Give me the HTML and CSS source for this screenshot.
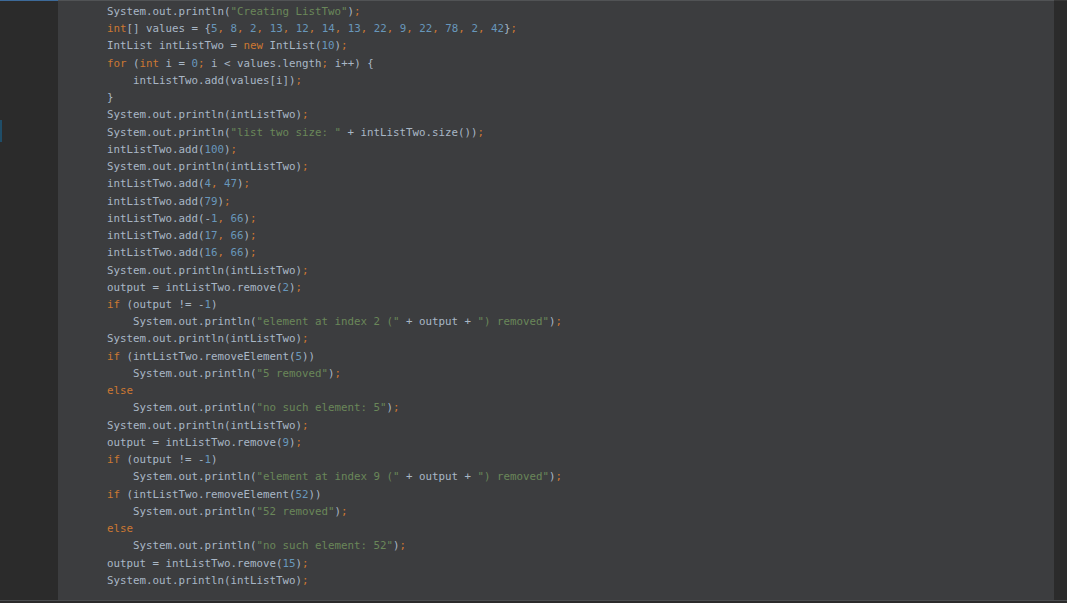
FILE: index.html
```html
<!DOCTYPE html>
<html>
<head>
<meta charset="utf-8">
<link rel="stylesheet" href="styles.css">
</head>
<body>
<div class="window">
  <div class="main">
    <div class="gutter"><span class="marker"></span></div>
    <div class="code">
<div class="line"><span class="d">System.out.println(</span><span class="s">"Creating ListTwo"</span>)<span class="k">;</span></div>
<div class="line"><span class="k">int</span>[] values = {<span class="n">5</span><span class="k">, </span><span class="n">8</span><span class="k">, </span><span class="n">2</span><span class="k">, </span><span class="n">13</span><span class="k">, </span><span class="n">12</span><span class="k">, </span><span class="n">14</span><span class="k">, </span><span class="n">13</span><span class="k">, </span><span class="n">22</span><span class="k">, </span><span class="n">9</span><span class="k">, </span><span class="n">22</span><span class="k">, </span><span class="n">78</span><span class="k">, </span><span class="n">2</span><span class="k">, </span><span class="n">42</span>}<span class="k">;</span></div>
<div class="line">IntList intListTwo = <span class="k">new </span>IntList(<span class="n">10</span>)<span class="k">;</span></div>
<div class="line"><span class="k">for </span>(<span class="k">int </span>i = <span class="n">0</span><span class="k">; </span>i &lt; values.length<span class="k">; </span>i++) {</div>
<div class="line">    intListTwo.add(values[i])<span class="k">;</span></div>
<div class="line">}</div>
<div class="line">System.out.println(intListTwo)<span class="k">;</span></div>
<div class="line">System.out.println(<span class="s">"list two size: "</span> + intListTwo.size())<span class="k">;</span></div>
<div class="line">intListTwo.add(<span class="n">100</span>)<span class="k">;</span></div>
<div class="line">System.out.println(intListTwo)<span class="k">;</span></div>
<div class="line">intListTwo.add(<span class="n">4</span><span class="k">, </span><span class="n">47</span>)<span class="k">;</span></div>
<div class="line">intListTwo.add(<span class="n">79</span>)<span class="k">;</span></div>
<div class="line">intListTwo.add(-<span class="n">1</span><span class="k">, </span><span class="n">66</span>)<span class="k">;</span></div>
<div class="line">intListTwo.add(<span class="n">17</span><span class="k">, </span><span class="n">66</span>)<span class="k">;</span></div>
<div class="line">intListTwo.add(<span class="n">16</span><span class="k">, </span><span class="n">66</span>)<span class="k">;</span></div>
<div class="line">System.out.println(intListTwo)<span class="k">;</span></div>
<div class="line">output = intListTwo.remove(<span class="n">2</span>)<span class="k">;</span></div>
<div class="line"><span class="k">if </span>(output != -<span class="n">1</span>)</div>
<div class="line">    System.out.println(<span class="s">"element at index 2 ("</span> + output + <span class="s">") removed"</span>)<span class="k">;</span></div>
<div class="line">System.out.println(intListTwo)<span class="k">;</span></div>
<div class="line"><span class="k">if </span>(intListTwo.removeElement(<span class="n">5</span>))</div>
<div class="line">    System.out.println(<span class="s">"5 removed"</span>)<span class="k">;</span></div>
<div class="line"><span class="k">else</span></div>
<div class="line">    System.out.println(<span class="s">"no such element: 5"</span>)<span class="k">;</span></div>
<div class="line">System.out.println(intListTwo)<span class="k">;</span></div>
<div class="line">output = intListTwo.remove(<span class="n">9</span>)<span class="k">;</span></div>
<div class="line"><span class="k">if </span>(output != -<span class="n">1</span>)</div>
<div class="line">    System.out.println(<span class="s">"element at index 9 ("</span> + output + <span class="s">") removed"</span>)<span class="k">;</span></div>
<div class="line"><span class="k">if </span>(intListTwo.removeElement(<span class="n">52</span>))</div>
<div class="line">    System.out.println(<span class="s">"52 removed"</span>)<span class="k">;</span></div>
<div class="line"><span class="k">else</span></div>
<div class="line">    System.out.println(<span class="s">"no such element: 52"</span>)<span class="k">;</span></div>
<div class="line">output = intListTwo.remove(<span class="n">15</span>)<span class="k">;</span></div>
<div class="line">System.out.println(intListTwo)<span class="k">;</span></div>
    </div>
    <div class="strip"></div>
  </div>
  <div class="bottom"></div>
</div>
</body>
</html>
```
FILE: styles.css
```css
html, body {
  margin: 0;
  padding: 0;
  background: #2b2b2b;
}
.window {
  width: 1067px;
  height: 603px;
  display: flex;
  flex-direction: column;
  overflow: hidden;
}
.main {
  flex: 1;
  display: flex;
  min-height: 0;
}
.gutter {
  width: 58px;
  flex: none;
  background: #2b2b2b;
  border-top: 1px solid #3d6a99;
  position: relative;
}
.marker {
  position: absolute;
  left: 0;
  top: 119px;
  width: 2px;
  height: 22px;
  background: #1f4d68;
}
.code {
  flex: 1;
  background: #3c3d3f;
  border-top: 1px solid #515355;
  padding: 2px 0 0 49px;
  font-family: "DejaVu Sans Mono", monospace;
  font-size: 10.8px;
  line-height: 17.24px;
  color: #a9b7c6;
  overflow: hidden;
}
.line {
  white-space: pre;
}
.k { color: #cc7832; }
.s { color: #6a8759; }
.n { color: #6897bb; }
.strip {
  width: 13px;
  flex: none;
  background: #2b2b2b;
  border-top: 1px solid #3a3a3a;
}
.bottom {
  height: 2px;
  flex: none;
  border-top: 1px solid #4b4d4f;
  background: #2b2b2b;
}
```
